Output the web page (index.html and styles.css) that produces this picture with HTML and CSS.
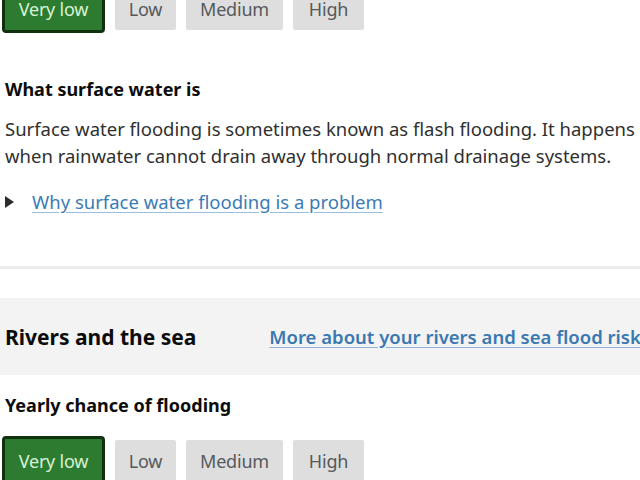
FILE: index.html
```html
<!DOCTYPE html>
<html lang="en">
<head>
<meta charset="utf-8">
<title>Flood risk</title>
<link rel="stylesheet" href="styles.css">
</head>
<body>
<main class="page">
  <section class="risk risk--first">
    <div class="scale">
      <span class="level level--active">Very low</span>
      <span class="level">Low</span>
      <span class="level">Medium</span>
      <span class="level">High</span>
    </div>
    <h3 class="subhead subhead--what">What surface water is</h3>
    <p class="body">Surface water flooding is sometimes known as flash flooding. It happens when rainwater cannot drain away through normal drainage systems.</p>
    <details class="details">
      <summary class="details__summary"><span class="details__text">Why surface water flooding is a problem</span></summary>
    </details>
  </section>

  <hr class="divider">

  <section class="risk">
    <div class="band">
      <h2 class="band__title">Rivers and the sea</h2>
      <a class="band__link" href="#rivers">More about your rivers and sea flood risk</a>
    </div>
    <h3 class="subhead subhead--yearly">Yearly chance of flooding</h3>
    <div class="scale">
      <span class="level level--active">Very low</span>
      <span class="level">Low</span>
      <span class="level">Medium</span>
      <span class="level">High</span>
    </div>
  </section>
</main>
</body>
</html>
```

FILE: styles.css
```css
html, body {
  margin: 0;
  padding: 0;
  background: #ffffff;
  overflow: hidden;
}

.page {
  font-family: "Noto Sans", "Liberation Sans", sans-serif;
  color: #0b0c0c;
  padding: 0 0 0 5px;
}

/* the page is scrolled a little, so the first scale sits partly above the fold */
.risk--first {
  margin-top: -16px;
}

.scale {
  display: flex;
  align-items: flex-start;
  gap: 10px;
  margin-left: -3px;
}

.level {
  box-sizing: border-box;
  display: flex;
  align-items: center;
  justify-content: center;
  height: 42px;
  margin-top: 4px;
  padding: 0;
  background: #dedede;
  color: #55595c;
  font-size: 18px;
  letter-spacing: -0.2px;
  border-radius: 2px;
  white-space: nowrap;
}

.level--active {
  height: 49px;
  margin-top: 0;
  width: 103px;
  background: #2d7b30;
  color: #d8f2d4;
  border: 3px solid #10320f;
  border-radius: 4px;
}

.level:nth-child(2) { width: 61px; }
.level:nth-child(3) { width: 97px; }
.level:nth-child(4) { width: 71px; }

.subhead {
  margin: 0;
  font-size: 18px;
  font-weight: 700;
}

.subhead--what {
  margin-top: 44px;
}

.body {
  margin: 14px 0 0;
  max-width: 635px;
  font-size: 18.5px;
  line-height: 27px;
  color: #2f3030;
}

.details {
  margin-top: 20px;
}

.details__summary {
  list-style: none;
  display: flex;
  align-items: center;
  font-size: 18.5px;
  color: #3b7bb5;
  cursor: pointer;
}

.details__summary::-webkit-details-marker {
  display: none;
}

.details__summary::before {
  content: "";
  width: 0;
  height: 0;
  border-top: 6px solid transparent;
  border-bottom: 6px solid transparent;
  border-left: 9px solid #2b2c2c;
  margin-right: 18px;
}

.details__text {
  text-decoration: underline;
  text-decoration-color: #9cbedd;
  text-underline-offset: 3px;
}

.divider {
  margin: 52px 0 0 -5px;
  border: 0;
  height: 3px;
  background: #ececec;
}

.band {
  display: flex;
  align-items: center;
  gap: 73px;
  margin: 29px 0 0 -5px;
  padding: 0 0 0 5px;
  height: 77px;
  background: #f3f3f3;
  white-space: nowrap;
  overflow: hidden;
}

.band__title {
  margin: 0;
  font-size: 21px;
  font-weight: 700;
}

.band__link {
  font-size: 18.5px;
  font-weight: 600;
  color: #3a78b0;
  text-decoration: underline;
  text-decoration-color: #8fb3d4;
  text-underline-offset: 3px;
}

.subhead--yearly {
  margin-top: 18px;
  margin-bottom: 19px;
}
```
